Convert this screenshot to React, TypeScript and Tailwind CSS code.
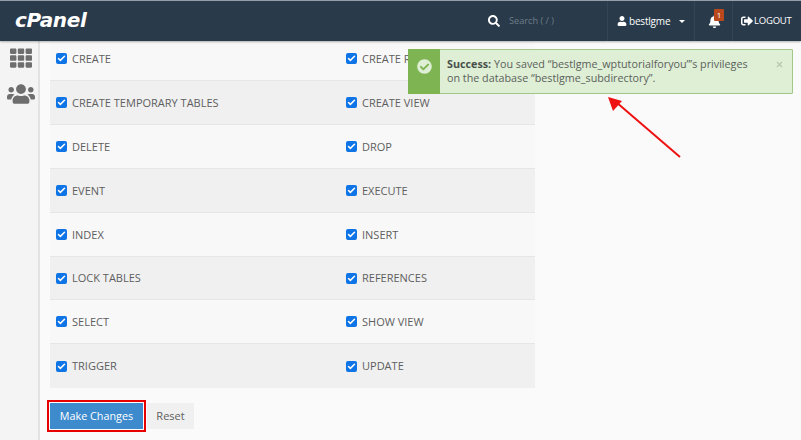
import { X, Check } from "lucide-react";
import { FaTh, FaUsers, FaSearch, FaUser, FaBell, FaCheckCircle, FaSignOutAlt } from "react-icons/fa";

const rows: [string, string][] = [
  ["CREATE", "CREATE ROUTINE"],
  ["CREATE TEMPORARY TABLES", "CREATE VIEW"],
  ["DELETE", "DROP"],
  ["EVENT", "EXECUTE"],
  ["INDEX", "INSERT"],
  ["LOCK TABLES", "REFERENCES"],
  ["SELECT", "SHOW VIEW"],
  ["TRIGGER", "UPDATE"],
];

function Box() {
  return (
    <span className="w-[11px] h-[11px] rounded-[2px] bg-[#0f74e6] flex items-center justify-center shrink-0">
      <Check size={9} strokeWidth={4} className="text-white" />
    </span>
  );
}

function Cell({ label }: { label: string }) {
  return (
    <div className="flex items-center gap-[4px] text-[11px] leading-[16px] text-[#5e5e5e]">
      <Box />
      <span className="ml-[1px]">{label}</span>
    </div>
  );
}

function rowHeight(i: number) {
  if (i === 0) return "h-[40px] pb-[4px]";
  if (i === 5) return "h-[43px]";
  return "h-[44px]";
}

export default function App() {
  return (
    <div className="relative w-[801px] h-[440px] overflow-hidden bg-[#fafafa]" style={{ fontFamily: '"Open Sans", sans-serif' }}>
      <div className="h-[1px] bg-[#9aa3ab]" />
      <header className="h-[40px] bg-[#293a4a] flex items-center text-white shadow-[0_1px_2px_rgba(0,0,0,0.3)] relative z-10">
        <div className="pl-[15px] w-[470px]">
          <span className="text-[20px] font-bold italic leading-none tracking-[-0.3px]" style={{ fontFamily: '"DejaVu Sans", sans-serif' }}>cPanel</span>
        </div>
        <div className="flex items-center w-[137px] pl-[18px] h-full">
          <FaSearch size={12} className="text-white" />
          <span className="ml-[9px] text-[9.2px] text-[#6f7c88]">Search ( / )</span>
        </div>
        <div className="flex items-center w-[87px] h-full border-l border-[#334556] pl-[9px]">
          <FaUser size={10} />
          <span className="ml-[2px] text-[10px] tracking-[-0.2px]">bestlgme</span>
          <span className="ml-[9px] w-0 h-0 border-x-[3px] border-x-transparent border-t-[3px] border-t-white" />
        </div>
        <div className="relative w-[38px] h-full border-l border-[#334556] flex items-center pl-[13px]">
          <FaBell size={13} />
          <span className="absolute left-[19px] top-[8px] w-[10px] h-[12px] bg-[#b9491c] text-[8px] leading-[12px] text-center rounded-[1px]">1</span>
        </div>
        <div className="flex items-center flex-1 h-full border-l border-[#334556] pl-[8px]">
          <FaSignOutAlt size={12} />
          <span className="ml-[1px] text-[9.5px] tracking-[-0.2px]">LOGOUT</span>
        </div>
      </header>
      <div className="flex">
        <aside className="w-[40px] h-[399px] bg-[#f4f4f4] border-r-2 border-[#e2e2e2] flex flex-col items-center pt-[6px] pl-[3px] shrink-0">
          <FaTh size={22} className="text-[#6e6e6e]" />
          <FaUsers size={28} className="text-[#6e6e6e] mt-[11px]" />
        </aside>
        <main className="pl-[10px]">
          <div className="w-[485px]">
            {rows.map(([a, b], i) => (
              <div
                key={a}
                className={`grid grid-cols-[290px_195px] items-center pl-[6px] ${rowHeight(i)} ${i % 2 ? "bg-[#f0f0f0]" : "bg-[#f8f8f8]"} ${i < 7 ? "border-b border-[#e6e6e6]" : ""}`}
              >
                <Cell label={a} />
                <Cell label={b} />
              </div>
            ))}
          </div>
          <div className="flex items-center mt-[15px]">
            <button className="w-[93px] h-[26px] bg-[#3d8bcd] text-white text-[10.8px] shadow-[0_0_0_1px_#ffffff,0_0_0_3px_#e60000]">Make Changes</button>
            <button className="ml-[4px] w-[47px] h-[26px] bg-[#f0f0f0] text-[#5e5e5e] text-[11px]">Reset</button>
          </div>
        </main>
      </div>

      <div className="absolute left-[408px] top-[49px] w-[385px] h-[45px] flex bg-[#deefd6] border border-[#a3c788] rounded-[1px] z-20">
        <div className="w-[32px] bg-[#7fb452] flex items-center justify-center -ml-[1px] -my-[1px] pb-[10px]">
          <FaCheckCircle size={15} className="text-[#deefd6]" />
        </div>
        <div className="flex-1 pl-[7px] pt-[7px] text-[10.75px] leading-[14px] text-[#5c605a]">
          <div><b className="font-bold text-[#4a4f4a]">Success:</b> You saved “bestlgme_wptutorialforyou”’s privileges</div>
          <div>on the database “bestlgme_subdirectory”.</div>
        </div>
        <X size={9} strokeWidth={3} className="absolute right-[8px] top-[10px] text-[#b5c7ac]" />
      </div>

      <svg className="absolute left-[600px] top-[91px] z-30" width="90" height="75" viewBox="0 0 90 75">
        <line x1="80" y1="66" x2="16" y2="11" stroke="#ee1111" strokeWidth="2" />
        <polygon points="8,6 22,10 13,20" fill="#ee1111" />
      </svg>
    </div>
  );
}
